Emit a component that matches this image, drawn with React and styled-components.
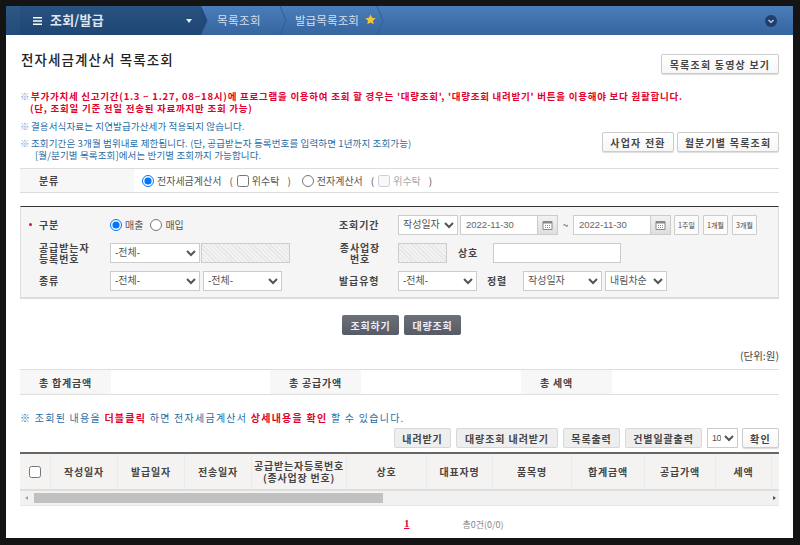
import React from "react";
import styled, { createGlobalStyle } from "styled-components";

const Global = createGlobalStyle`
  html, body { margin: 0; padding: 0; background: #141414; }
  body { font-family: "Noto Sans CJK KR", "Liberation Sans", sans-serif; font-size: 10px; color: #333; }
  * { box-sizing: border-box; }
  input[type=radio], input[type=checkbox] { margin: 0; width: 12px; height: 12px; flex: none; }
`;

const Frame = styled.div`
  position: relative; margin: 6px 7px 7px 6px; width: 787px; height: 532px; background: #fff; overflow: hidden;
`;
const Header = styled.header`
  display: flex; align-items: stretch; height: 29px;
  background: linear-gradient(#4a7db9, #36659f);
`;
const MenuBlock = styled.div`
  display: flex; align-items: center; width: 195px; padding-left: 27px;
  background: linear-gradient(#28527f, #1f4674);
  box-shadow: inset 14px 0 0 rgba(255,255,255,.03);
`;
const MenuTitle = styled.span`
  flex: 1; margin: 0 0 2px 8px; font-size: 13px; font-weight: 700; letter-spacing: .2px; color: #dfe7f1;
`;
const Caret = styled.i`
  width: 0; height: 0; margin-right: 9px; border: 3.5px solid transparent; border-top: 4px solid #e8eef5; border-bottom: 0;
`;
const Crumb = styled.span`
  display: flex; align-items: center; gap: 6px; margin-left: ${p => p.$left}px; padding-bottom: 2px; font-size: 11.5px; color: #d3dfee; letter-spacing: ${p => p.$ls}px;
`;
const HeaderEnd = styled.div`
  margin-left: auto; margin-right: 16px; align-self: center; display: flex;
`;
const Page = styled.main`
  display: flex; flex-direction: column; padding: 19px 14px 0;
`;
const TitleRow = styled.div`
  display: flex; justify-content: space-between; align-items: flex-start; height: 19px; margin-bottom: 17px;
`;
const Title = styled.h1`
  margin: -5px 0 0 1px; font-size: 13.5px; font-weight: 500; letter-spacing: 1.1px; color: #222;
`;
const WhiteBtn = styled.button`
  height: 20px; padding: 0; width: ${p => p.$w}px; background: linear-gradient(#fff, #f6f6f6); border: 1px solid #ccc; border-radius: 2px;
  font: 700 10px "Noto Sans CJK KR", sans-serif; letter-spacing: 1.2px; color: #444; box-shadow: 0 1px 1px #ddd; white-space: nowrap;
`;
const Note = styled.p`
  margin: 0; position: relative; padding-left: ${p => p.$pad || 10}px; font-size: 9.5px; line-height: ${p => p.$lh || 12}px; letter-spacing: ${p => p.$ls ?? .13}px;
  color: ${p => p.$red ? "#e2002c" : "#1f6da6"}; font-weight: ${p => p.$red ? 700 : 400};
  white-space: nowrap;
`;
const Mark = styled.span`
  color: #7aa5cc; font-weight: 400; margin-right: 1px; margin-left: -10px; display: inline-block; width: 10px; letter-spacing: 0;
`;
const NoteRow = styled.div`
  display: flex; justify-content: space-between; margin-top: 6px;
`;
const NoteStack = styled.div`
  display: flex; flex-direction: column; gap: 6px;
`;
const BtnPair = styled.div`
  display: flex; gap: 3px; margin-top: 12px;
`;
const CategoryBar = styled.div`
  display: flex; height: 25px; margin-top: 7px; border-top: 1px solid #ddd; border-bottom: 1px solid #ddd;
`;
const LabelCell = styled.div`
  display: flex; align-items: center; flex: none; width: ${p => p.$w}px; padding-left: ${p => p.$pad ?? 19}px;
  background: #f7f7f7; font-weight: 700; font-size: 10px; letter-spacing: .8px; color: #444; white-space: nowrap;
`;
const Options = styled.div`
  display: flex; align-items: center; padding-left: 8px; font-size: 10px; color: #555;
`;
const Opt = styled.label`
  display: flex; align-items: center; gap: 3px; margin-left: ${p => p.$ml ?? 0}px; color: ${p => p.$off ? "#aaa" : "#555"}; white-space: nowrap;
`;
const Paren = styled.span`
  color: #555; margin: 0 ${p => p.$r ?? 0}px 0 ${p => p.$l ?? 0}px;
`;
const Search = styled.section`
  display: flex; flex-direction: column; height: 93px; margin-top: 13px; padding-top: 8px;
  background: #f5f5f5; border: 2px solid #ddd; border-width: 1px 1px 2px; border-top: 1px solid #333;
  gap: 9px;
`;
const Row = styled.div`
  display: flex; align-items: center; height: 19px;
`;
const Left = styled.div`
  display: flex; align-items: center; width: 318px; flex: none;
`;
const Dot = styled.i`
  width: 3px; height: 3px; border-radius: 50%; background: #d8103a; margin: 0 7px 0 8px; flex: none;
`;
const FieldLabel = styled.div`
  flex: none; width: ${p => p.$w}px; margin-left: ${p => p.$ml || 0}px; font-weight: 700; font-size: 10px; line-height: 11px; letter-spacing: .9px; color: #444;
  white-space: nowrap; text-align: ${p => p.$center ? "center" : "left"};
`;
const Select = styled.select`
  flex: none; width: ${p => p.$w}px; height: ${p => p.$h || 20}px; margin-left: ${p => p.$ml || 0}px; padding: 0; background: #fff; border: 1px solid #ccc; border-radius: 0;
  font: 400 10px "Liberation Sans", "Noto Sans CJK KR", sans-serif; color: #555;
`;
const PageSize = styled(Select)`
  font-size: 9px; letter-spacing: -.4px;
`;
const Hatch = styled.div`
  flex: none; width: ${p => p.$w}px; height: 20px; margin-left: ${p => p.$ml || 0}px; border: 1px solid #ccc;
  background: repeating-linear-gradient(45deg, #e6e6e6 0 1px, #f2f2f2 1px 3px);
`;
const TextBox = styled.input`
  flex: none; width: ${p => p.$w}px; height: 20px; margin-left: ${p => p.$ml || 0}px; padding: 0 0 0 5px; border: 1px solid #ccc; background: #fff;
  font: 400 9.5px "Liberation Sans", sans-serif; color: #666; outline: none;
`;
const CalBtn = styled.span`
  display: flex; align-items: center; justify-content: center; flex: none; width: 20px; height: 20px;
  background: linear-gradient(#f2f2f2, #dedede); border: 1px solid #ccc; border-left: 0;
`;
const Tilde = styled.span`
  flex: none; width: 15px; text-align: center; color: #555; font-size: 10px;
`;
const Period = styled.button`
  flex: none; width: 25px; height: 20px; padding: 0; margin-left: ${p => p.$ml}px; background: #fbfbfb; border: 1px solid #ccc; border-radius: 1px;
  font: 400 7px "Noto Sans CJK KR", sans-serif; color: #444; white-space: nowrap;
`;
const Actions = styled.div`
  display: flex; justify-content: center; gap: 5px; margin-top: 16px; padding-left: 4px;
`;
const DarkBtn = styled.button`
  width: 57px; height: 20px; padding: 0; background: linear-gradient(#6b7079, #565b65); border: 0; border-radius: 2px;
  font: 700 10px "Noto Sans CJK KR", sans-serif; letter-spacing: .8px; color: #eef;
`;
const Unit = styled.div`
  text-align: right; margin-top: 15px; height: 12px; line-height: 12px; font-size: 10.5px; color: #444;
`;
const Summary = styled.div`
  display: flex; height: 26px; margin-top: 7px; border-top: 1px solid #ddd; border-bottom: 1px solid #ddd;
`;
const Blank = styled.div`
  flex: none; width: ${p => p.$w}px;
`;
const Hint = styled.p`
  margin: 17px 0 0; height: 12px; line-height: 12px; font-size: 10px; letter-spacing: 1.25px; color: #1f6da6; white-space: nowrap;
`;
const Hot = styled.b`
  color: #e2002c; font-weight: 700;
`;
const Tools = styled.div`
  display: flex; justify-content: flex-end; align-items: center; gap: 5px; margin-top: 4px; height: 20px;
`;
const GrayBtn = styled.button`
  width: ${p => p.$w}px; height: 20px; padding: 0; background: #eee; border: 1px solid #d8d8d8; border-radius: 2px;
  font: 700 10px "Noto Sans CJK KR", sans-serif; letter-spacing: .9px; color: #444; white-space: nowrap;
`;
const ConfirmBtn = styled(WhiteBtn)`
  margin-left: -1px;
`;
const Grid = styled.div`
  display: grid; grid-template-columns: 31px 67px 67px 67px 95px 80px 66px 79px 73px 71px 56px 7px;
  height: 39px; margin-top: 4px; border-top: 2px solid #666; border-bottom: 2px solid #ddd; background: #f4f3f2;
`;
const Th = styled.div`
  display: flex; align-items: center; justify-content: center; text-align: center; border-right: 1px solid #ebebeb;
  font-weight: 700; font-size: 10px; line-height: 12px; letter-spacing: .8px; color: #444; white-space: nowrap;
  ${p => p.$last && "border-right: 0;"}
`;
const ScrollBar = styled.div`
  display: flex; align-items: center; justify-content: space-between; height: 15px; padding: 0 3px 0 5px; background: #f1f1f1; border-bottom: 1px solid #e6e6e6;
`;
const Thumb = styled.div`
  height: 10px; width: 349px; margin-left: 6px; margin-right: auto; background: #c1c1c1;
`;
const Arrow = styled.i`
  width: 0; height: 0; border: 2.5px solid transparent; ${p => p.$dir === "l" ? "border-right: 3px solid #a3a3a3; border-left: 0;" : "border-left: 3px solid #505050; border-right: 0;"}
`;
const Pager = styled.div`
  display: flex; align-items: center; height: 16px; margin-top: 9px; padding-left: 384px;
`;
const PageNo = styled.a`
  font: 700 11px "Liberation Serif", serif; color: #d8103a; text-decoration: underline;
`;
const Total = styled.span`
  margin: 2px 0 0 53px; font-size: 9px; color: #888;
`;

const Star = () => (
  <svg width="11" height="11" viewBox="0 0 24 24"><path fill="#f5c23c" d="M12 1l3.4 7.3 7.9.9-5.9 5.4 1.6 7.9L12 18.6 5 22.5l1.6-7.9L.7 9.2l7.9-.9z"/></svg>
);
const Chevron = ({ ml }) => (
  <svg width="8" height="29" viewBox="0 0 8 29" style={{ marginLeft: ml }}><path fill="none" stroke="#2f5e99" strokeWidth="1" d="M1 0l6 14.5L1 29"/></svg>
);
const Tip = () => (
  <svg width="7" height="29" viewBox="0 0 7 29"><path fill="#22497a" d="M0 0l6.5 14.5L0 29z"/></svg>
);
const Burger = () => (
  <svg width="9" height="8" viewBox="0 0 9 8"><path fill="#fff" d="M0 0h9v1.6H0zM0 3.2h9v1.6H0zM0 6.4h9V8H0z"/></svg>
);
const Collapse = () => (
  <svg width="12" height="12" viewBox="0 0 12 12"><circle cx="6" cy="6" r="6" fill="#1f3f6c"/><path fill="none" stroke="#cfd9e6" strokeWidth="1.2" d="M3.5 5l2.5 2.5L8.5 5"/></svg>
);
const Cal = () => (
  <svg width="11" height="10" viewBox="0 0 11 10"><path fill="#fff" stroke="#888" d="M1 1.5h9v8H1z"/><path fill="#888" d="M1 1h9v2.5H1zM3 5h1v1H3zM5 5h1v1H5zM7 5h1v1H7zM3 7h1v1H3zM5 7h1v1H5zM7 7h1v1H7z"/></svg>
);

const All = ({ w, ml }) => (
  <Select $w={w} $ml={ml}><option>-전체-</option></Select>
);

export default function App() {
  return (
    <>
      <Global />
      <Frame>
        <Header>
          <MenuBlock><Burger /><MenuTitle>조회/발급</MenuTitle><Caret /></MenuBlock>
          <Tip />
          <Crumb $left={9} $ls={.4}>목록조회</Crumb>
          <Chevron ml={18} />
          <Crumb $left={8} $ls={.1}>발급목록조회<Star /></Crumb>
          <Chevron ml={0} />
          <HeaderEnd><Collapse /></HeaderEnd>
        </Header>
        <Page>
          <TitleRow>
            <Title>전자세금계산서 목록조회</Title>
            <WhiteBtn $w={118}>목록조회 동영상 보기</WhiteBtn>
          </TitleRow>
          <Note $red $ls={.75}><Mark>※</Mark>부가가치세 신고기간(1.3 ~ 1.27, 08~18시)에 프로그램을 이용하여 조회 할 경우는 '대량조회', '대량조회 내려받기' 버튼을 이용해야 보다 원활합니다.</Note>
          <Note $red $ls={.75}>(단, 조회일 기준 전일 전송된 자료까지만 조회 가능)</Note>
          <NoteRow>
            <NoteStack>
              <Note><Mark>※</Mark>결용서식자료는 지연발급가산세가 적용되지 않습니다.</Note>
              <div>
                <Note $lh={11}><Mark>※</Mark>조회기간은 3개월 범위내로 제한됩니다. (단, 공급받는자 등록번호를 입력하면 1년까지 조회가능)</Note>
                <Note $pad={15} $lh={12}>[월/분기별 목록조회]에서는 반기별 조회까지 가능합니다.</Note>
              </div>
            </NoteStack>
            <BtnPair>
              <WhiteBtn $w={72}>사업자 전환</WhiteBtn>
              <WhiteBtn $w={102}>월분기별 목록조회</WhiteBtn>
            </BtnPair>
          </NoteRow>
          <CategoryBar>
            <LabelCell $w={114}>분류</LabelCell>
            <Options>
              <Opt><input type="radio" name="c" defaultChecked />전자세금계산서</Opt>
              <Opt $ml={8}><Paren $r={1}>(</Paren><input type="checkbox" />위수탁<Paren $l={5}>)</Paren></Opt>
              <Opt $ml={11}><input type="radio" name="c" />전자계산서</Opt>
              <Opt $ml={8} $off><Paren $r={1}>(</Paren><input type="checkbox" disabled />위수탁<Paren $l={5}>)</Paren></Opt>
            </Options>
          </CategoryBar>
          <Search>
            <Row>
              <Left>
                <Dot /><FieldLabel $w={71}>구분</FieldLabel>
                <Opt><input type="radio" name="s" defaultChecked />매출</Opt>
                <Opt $ml={7}><input type="radio" name="s" />매입</Opt>
              </Left>
              <FieldLabel $w={59}>조회기간</FieldLabel>
              <Select $w={60}><option>작성일자</option></Select>
              <TextBox $w={78} $ml={2} defaultValue="2022-11-30" />
              <CalBtn><Cal /></CalBtn>
              <Tilde>~</Tilde>
              <TextBox $w={78} defaultValue="2022-11-30" />
              <CalBtn><Cal /></CalBtn>
              <Period $ml={3}>1주일</Period>
              <Period $ml={4}>1개월</Period>
              <Period $ml={4}>3개월</Period>
            </Row>
            <Row>
              <Left>
                <FieldLabel $w={71} $ml={18}>공급받는자<br />등록번호</FieldLabel>
                <All w={90} /><Hatch $w={89} $ml={1} />
              </Left>
              <FieldLabel $w={42} $center>종사업장<br />번호</FieldLabel>
              <Hatch $w={49} $ml={17} />
              <FieldLabel $w={35} $ml={11}>상호</FieldLabel>
              <TextBox $w={128} />
            </Row>
            <Row>
              <Left>
                <FieldLabel $w={71} $ml={18}>종류</FieldLabel>
                <All w={90} /><All w={79} ml={3} />
              </Left>
              <FieldLabel $w={59}>발급유형</FieldLabel>
              <All w={79} />
              <FieldLabel $w={36} $ml={10}>정렬</FieldLabel>
              <Select $w={79}><option>작성일자</option></Select>
              <Select $w={62} $ml={3}><option>내림차순</option></Select>
            </Row>
          </Search>
          <Actions>
            <DarkBtn>조회하기</DarkBtn>
            <DarkBtn>대량조회</DarkBtn>
          </Actions>
          <Unit>(단위:원)</Unit>
          <Summary>
            <LabelCell $w={91}>총 합계금액</LabelCell><Blank $w={159} />
            <LabelCell $w={91}>총 공급가액</LabelCell><Blank $w={160} />
            <LabelCell $w={91}>총 세액</LabelCell>
          </Summary>
          <Hint>※ 조회된 내용을 <Hot>더블클릭</Hot> 하면 전자세금계산서 <Hot>상세내용을 확인</Hot> 할 수 있습니다.</Hint>
          <Tools>
            <GrayBtn $w={57}>내려받기</GrayBtn>
            <GrayBtn $w={102}>대량조회 내려받기</GrayBtn>
            <GrayBtn $w={57}>목록출력</GrayBtn>
            <GrayBtn $w={77}>건별일괄출력</GrayBtn>
            <PageSize $w={31}><option>10</option></PageSize>
            <ConfirmBtn $w={37}>확인</ConfirmBtn>
          </Tools>
          <Grid>
            <Th><input type="checkbox" /></Th>
            <Th>작성일자</Th>
            <Th>발급일자</Th>
            <Th>전송일자</Th>
            <Th>공급받는자등록번호<br />(종사업장 번호)</Th>
            <Th>상호</Th>
            <Th>대표자명</Th>
            <Th>품목명</Th>
            <Th>합계금액</Th>
            <Th>공급가액</Th>
            <Th>세액</Th>
            <Th $last />
          </Grid>
          <ScrollBar><Arrow $dir="l" /><Thumb /><Arrow $dir="r" /></ScrollBar>
          <Pager><PageNo>1</PageNo><Total>총0건(0/0)</Total></Pager>
        </Page>
      </Frame>
    </>
  );
}
